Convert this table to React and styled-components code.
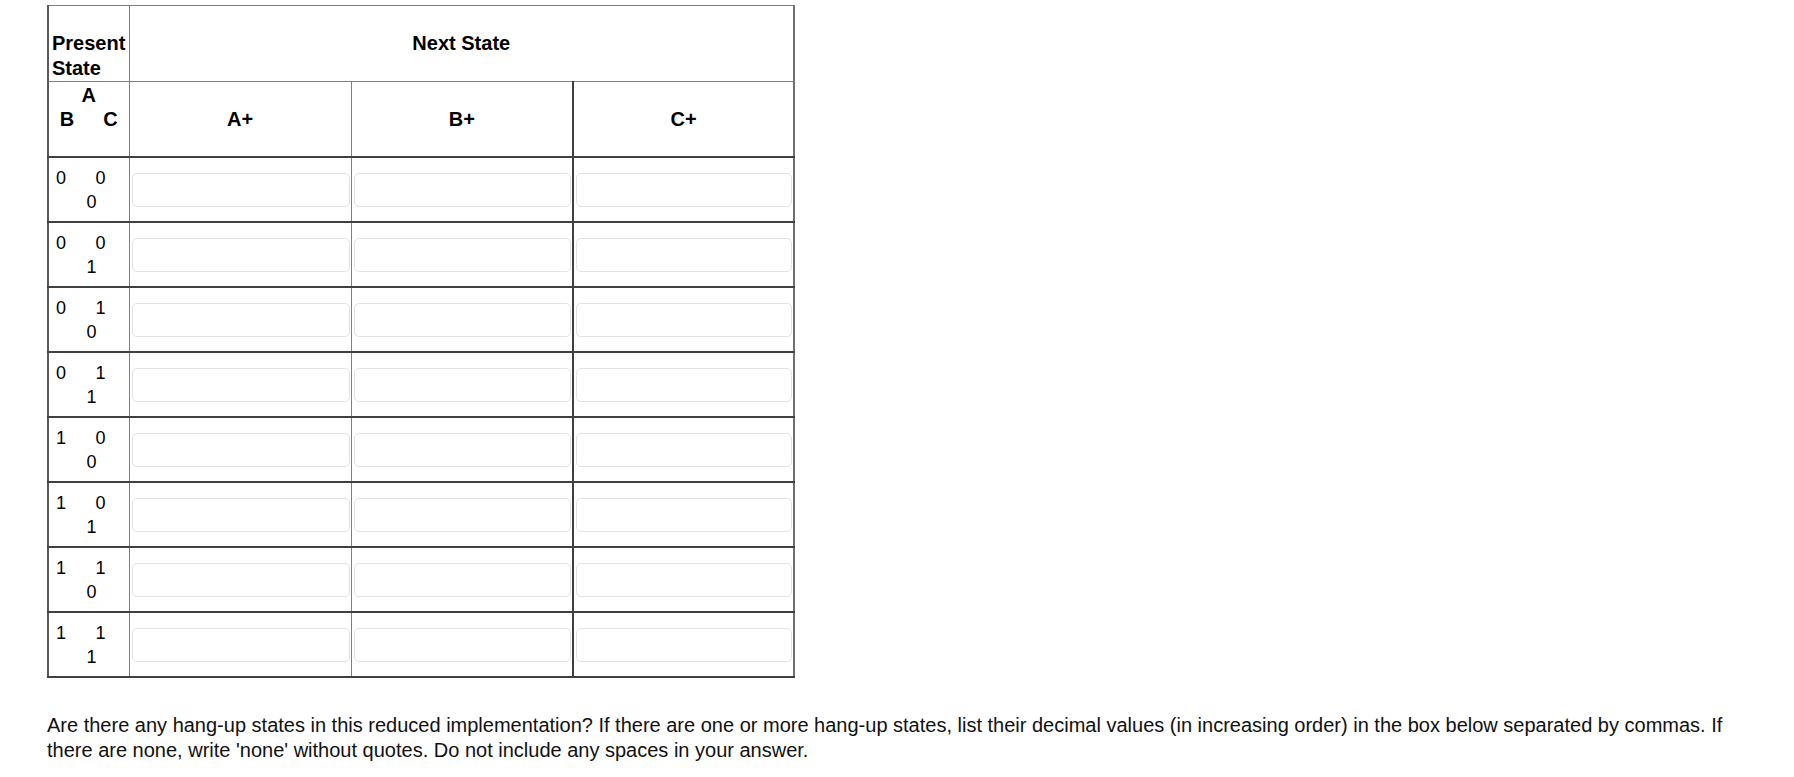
import React from 'react'
import styled, { createGlobalStyle } from 'styled-components'

const GlobalStyle = createGlobalStyle`
  body {
    margin: 0;
    background: #fff;
    color: #000;
    font-family: 'Liberation Sans', Arial, sans-serif;
  }
`

const THIN = '1px solid #808080'
const THICK = '2px solid #404040'

const Page = styled.div`
  padding: 5px 0 0 47px;
`

const StateTable = styled.table`
  border-collapse: collapse;
  table-layout: fixed;
  width: 746px;
  border-left: 2px solid #5a5a5a;
  border-right: 2px solid #707070;
  border-top: ${THIN};
`

const HeadCell = styled.th`
  height: ${p => p.$height}px;
  padding: 0 3px;
  font-size: 20px;
  font-weight: bold;
  line-height: ${p => p.$lh || 25}px;
  text-align: ${p => p.$align || 'center'};
  vertical-align: ${p => p.$valign || 'middle'};
  border-top: ${THIN};
  border-left: ${THIN};
  border-right: ${p => (p.$thickRight ? THICK : THIN)};
  border-bottom: ${p => (p.$thickBottom ? THICK : THIN)};
`

const VarStack = styled.div`
  display: flex;
  flex-direction: column;
  align-items: center;
  padding-top: 1px;
`

const VarLine = styled.div`
  display: flex;
  justify-content: center;
  gap: 29px;
  height: 24px;
`

const BodyCell = styled.td`
  height: 63px;
  padding: ${p => (p.$bits ? '0 0 0 7px' : '0 1px 0 2px')};
  vertical-align: middle;
  font-size: 18px;
  line-height: 24px;
  border-top: ${THICK};
  border-bottom: ${THICK};
  border-left: ${THIN};
  border-right: ${p => (p.$thickRight ? THICK : THIN)};
`

const BitLine = styled.div`
  display: flex;
  gap: ${p => p.$gap || 0}px;
  padding-left: ${p => p.$indent || 0}px;
`

const AnswerInput = styled.input`
  display: block;
  box-sizing: border-box;
  width: 100%;
  height: 34px;
  margin: 0;
  padding: 4px 8px;
  border: 1px solid #e2e2e2;
  border-radius: 5px;
  background: #fff;
  font: 18px 'Liberation Sans', Arial, sans-serif;
  outline: none;
`

const Question = styled.p`
  width: 1700px;
  margin: 35px 0 0;
  font-size: 20px;
  line-height: 25px;
  color: #111;
`

const states = [0, 1, 2, 3, 4, 5, 6, 7].map(n => ({
  a: (n >> 2) & 1,
  b: (n >> 1) & 1,
  c: n & 1,
}))

const StateBits = ({ a, b, c }) => (
  <>
    <BitLine $gap={29.5}>
      <span>{a}</span>
      <span>{b}</span>
    </BitLine>
    <BitLine $indent={30.5}>
      <span>{c}</span>
    </BitLine>
  </>
)

export default function App() {
  return (
    <Page>
      <GlobalStyle />
      <StateTable>
        <colgroup>
          <col style={{ width: 81 }} />
          <col style={{ width: 222 }} />
          <col style={{ width: 222 }} />
          <col style={{ width: 221 }} />
        </colgroup>
        <thead>
          <tr>
            <HeadCell $height={75} $align="left" $valign="bottom">
              Present State
            </HeadCell>
            <HeadCell colSpan={3}>Next State</HeadCell>
          </tr>
          <tr>
            <HeadCell $height={74} $valign="top" $thickBottom $lh={24}>
              <VarStack>
                <VarLine>A</VarLine>
                <VarLine>
                  <span>B</span>
                  <span>C</span>
                </VarLine>
              </VarStack>
            </HeadCell>
            <HeadCell $thickBottom>A+</HeadCell>
            <HeadCell $thickBottom $thickRight>B+</HeadCell>
            <HeadCell $thickBottom>C+</HeadCell>
          </tr>
        </thead>
        <tbody>
          {states.map((s, i) => (
            <tr key={i}>
              <BodyCell $bits>
                <StateBits {...s} />
              </BodyCell>
              <BodyCell>
                <AnswerInput type="text" />
              </BodyCell>
              <BodyCell $thickRight>
                <AnswerInput type="text" />
              </BodyCell>
              <BodyCell>
                <AnswerInput type="text" />
              </BodyCell>
            </tr>
          ))}
        </tbody>
      </StateTable>
      <Question>
        Are there any hang-up states in this reduced implementation? If there are one or more
        hang-up states, list their decimal values (in increasing order) in the box below
        separated by commas. If there are none, write 'none' without quotes. Do not include any
        spaces in your answer.
      </Question>
    </Page>
  )
}
